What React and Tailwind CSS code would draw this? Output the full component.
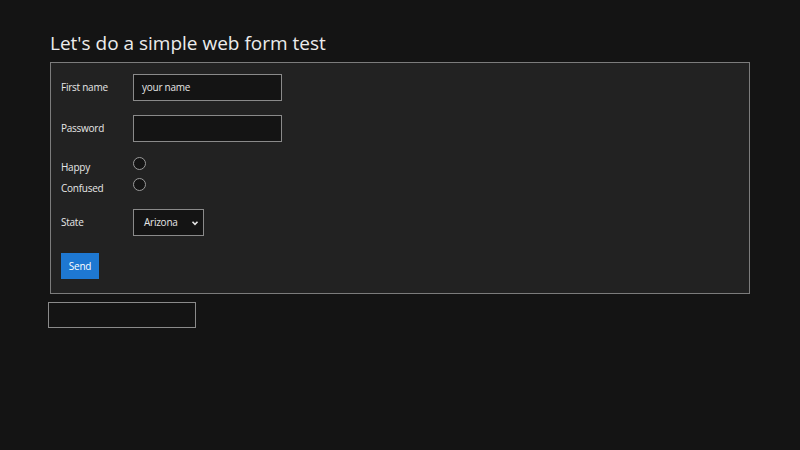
export default function App() {
  const font = { fontFamily: '"Open Sans", "Noto Sans", sans-serif' }
  return (
    <div className="min-h-[450px] w-full bg-[#141414] text-[#e6e6e6]" style={font}>
      <div className="px-[48px] pt-[28px]">
        <h1 className="ml-[2px] text-[19px] leading-[30px] text-[#ececec]">Let's do a simple web form test</h1>
        <form className="ml-[2px] mt-[4px] flex w-[700px] flex-col border border-[#7c7c7c] bg-[#222222] px-[10px] pb-[14px] pt-[11px] text-[10px] tracking-[-0.25px]">
          <div className="flex h-[27px] items-center">
            <label className="w-[72px]">First name</label>
            <div className="flex h-[27px] w-[149px] items-center border border-[#8a8a8a] bg-[#141414] px-[8px]">your name</div>
          </div>
          <div className="mt-[14px] flex h-[27px] items-center">
            <label className="w-[72px]">Password</label>
            <div className="h-[27px] w-[149px] border border-[#8a8a8a] bg-[#141414]"></div>
          </div>
          <div className="mt-[14px] flex h-[21px] items-start">
            <label className="w-[72px] pt-[4px]">Happy</label>
            <span className="mt-[1px] h-[13px] w-[13px] rounded-full border border-[#9a9a9a] bg-[#141414]"></span>
          </div>
          <div className="flex h-[21px] items-start">
            <label className="w-[72px] pt-[4px]">Confused</label>
            <span className="mt-[1px] h-[13px] w-[13px] rounded-full border border-[#9a9a9a] bg-[#141414]"></span>
          </div>
          <div className="mt-[11px] flex h-[27px] items-center">
            <label className="w-[72px]">State</label>
            <div className="flex h-[27px] w-[71px] items-center justify-between border border-[#8a8a8a] bg-[#141414] pl-[10px] pr-[4px]">
              <span>Arizona</span>
              <svg width="8" height="8" viewBox="0 0 8 8" fill="none" stroke="#e6e6e6" strokeWidth="1.6">
                <path d="M1.5 2.8 L4 5.3 L6.5 2.8" />
              </svg>
            </div>
          </div>
          <div className="mt-[17px] flex">
            <button type="button" className="flex h-[26px] w-[38px] items-center justify-center bg-[#1e78d2] text-white">Send</button>
          </div>
        </form>
        <div className="mt-[8px] h-[26px] w-[148px] border border-[#8a8a8a] bg-[#141414]"></div>
      </div>
    </div>
  )
}
